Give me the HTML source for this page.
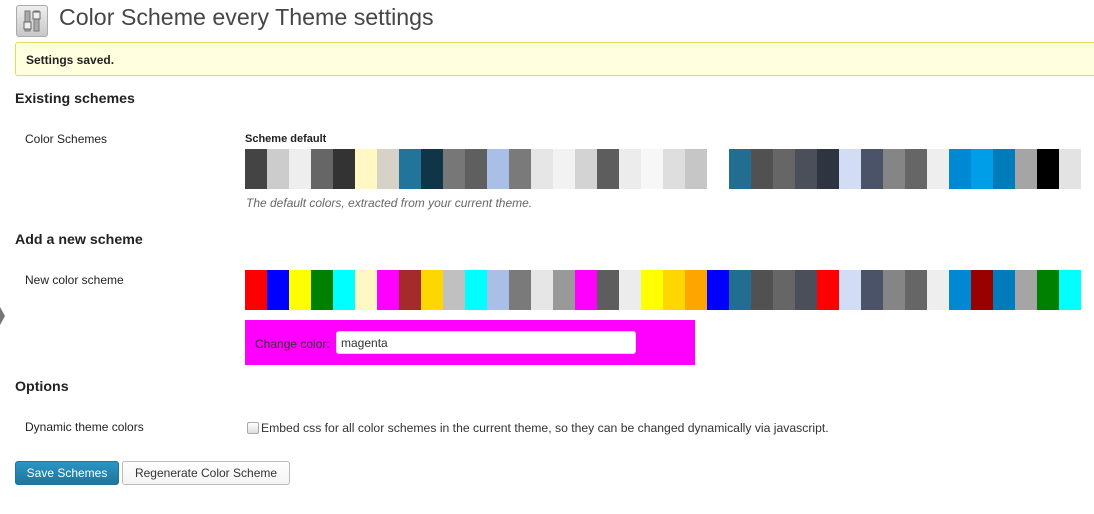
<!DOCTYPE html>
<html><head><meta charset="utf-8"><style>
body{margin:0;width:1094px;height:514px;background:#fff;font-family:"Liberation Sans",sans-serif;color:#333;position:relative;overflow:hidden}
.a{position:absolute}
.row{position:absolute;display:flex;height:40px}
.row span{width:22px;height:40px;display:block}
h1{position:absolute;left:59px;top:4px;margin:0;font-weight:normal;font-size:23.2px;color:#464646}
h3{position:absolute;left:15px;margin:0;font-size:14.2px;font-weight:bold;color:#222}
.lbl{position:absolute;left:25px;font-size:12px;color:#222}
</style></head><body>
<div class="a" style="left:16px;top:5px;width:30px;height:30px;border:1px solid #aaa;border-radius:3px;background:linear-gradient(#eee,#c8c8c8)">
<svg width="30" height="30" viewBox="0 0 30 30"><rect x="8" y="5" width="5" height="20" fill="#aaa" stroke="#777" stroke-width="1"/><rect x="7" y="16" width="7" height="7" fill="#eee" stroke="#666"/><rect x="17" y="5" width="5" height="20" fill="#aaa" stroke="#777"/><rect x="16" y="6" width="7" height="7" fill="#eee" stroke="#666"/></svg></div>
<h1>Color Scheme every Theme settings</h1>
<div class="a" style="left:15px;top:42px;width:1090px;height:32px;background:#ffffe0;border:1px solid #e6db55;border-radius:3px"></div>
<div class="a" style="left:26px;top:53px;font-size:12px;font-weight:bold;color:#222">Settings saved.</div>
<h3 style="top:91px">Existing schemes</h3>
<div class="lbl" style="top:132px">Color Schemes</div>
<div class="a" style="left:245px;top:133px;font-size:11px;font-weight:bold;color:#222">Scheme default</div>
<div class="row" style="left:245px;top:149px">
<span style="background:#444"></span><span style="background:#ccc"></span><span style="background:#eee"></span><span style="background:#666"></span><span style="background:#333"></span><span style="background:#fff8c4"></span><span style="background:#d6d2c8"></span><span style="background:#21759b"></span><span style="background:#103547"></span><span style="background:#777"></span><span style="background:#5f5f5f"></span><span style="background:#a9bfe5"></span><span style="background:#7a7a7a"></span><span style="background:#e6e6e6"></span><span style="background:#f2f2f2"></span><span style="background:#d3d3d3"></span><span style="background:#5d5d5d"></span><span style="background:#ececec"></span><span style="background:#f7f7f7"></span><span style="background:#dedede"></span><span style="background:#c6c6c6"></span><span style="background:#fff"></span>
<span style="background:#216e91"></span><span style="background:#515151"></span><span style="background:#666"></span><span style="background:#4a4f59"></span><span style="background:#2e3440"></span><span style="background:#d2ddf5"></span><span style="background:#4a5367"></span><span style="background:#858585"></span><span style="background:#666"></span><span style="background:#eee"></span><span style="background:#0088d3"></span><span style="background:#009ee8"></span><span style="background:#007cba"></span><span style="background:#a5a5a5"></span><span style="background:#000"></span><span style="background:#e3e3e3"></span>
</div>
<div class="a" style="left:246px;top:196px;font-size:12px;font-style:italic;color:#666">The default colors, extracted from your current theme.</div>
<h3 style="top:232px">Add a new scheme</h3>
<div class="lbl" style="top:273px">New color scheme</div>
<div class="row" style="left:245px;top:270px">
<span style="background:red"></span><span style="background:blue"></span><span style="background:yellow"></span><span style="background:green"></span><span style="background:cyan"></span><span style="background:#fff8c4"></span><span style="background:magenta"></span><span style="background:#a52a2a"></span><span style="background:gold"></span><span style="background:silver"></span><span style="background:cyan"></span><span style="background:#a9bfe5"></span><span style="background:#7a7a7a"></span><span style="background:#e6e6e6"></span><span style="background:#999"></span><span style="background:magenta"></span><span style="background:#5d5d5d"></span><span style="background:#ececec"></span><span style="background:yellow"></span><span style="background:gold"></span><span style="background:orange"></span><span style="background:blue"></span><span style="background:#216e91"></span><span style="background:#515151"></span><span style="background:#666"></span><span style="background:#4a4f59"></span><span style="background:red"></span><span style="background:#d2ddf5"></span><span style="background:#4a5367"></span><span style="background:#858585"></span><span style="background:#666"></span><span style="background:#eee"></span><span style="background:#0088d3"></span><span style="background:#900"></span><span style="background:#007cba"></span><span style="background:#a5a5a5"></span><span style="background:green"></span><span style="background:cyan"></span>
</div>
<div class="a" style="left:0;top:307px;width:0;height:0;border-top:9px solid transparent;border-bottom:9px solid transparent;border-left:5px solid #777"></div>
<div class="a" style="left:245px;top:320px;width:450px;height:45px;background:#f0f"></div>
<div class="a" style="left:255px;top:337px;font-size:12px;color:#333">Change color:</div>
<div class="a" style="left:336px;top:331px;background:#fff;border:1px solid #ddd;border-radius:3px;font-size:12px;line-height:23px;padding-left:4px;box-sizing:border-box;width:300px;height:23px;color:#333">magenta</div>
<h3 style="top:379px">Options</h3>
<div class="lbl" style="top:420px">Dynamic theme colors</div>
<div class="a" style="left:247px;top:422px;width:10px;height:10px;border:1px solid #aaa;border-radius:2px;background:linear-gradient(#fff,#ddd)"></div>
<div class="a" style="left:261px;top:421px;font-size:12.2px;color:#333">Embed css for all color schemes in the current theme, so they can be changed dynamically via javascript.</div>
<div class="a" style="left:15px;top:461px;width:104px;height:24px;background:linear-gradient(#2a95c5,#21759b);border:1px solid #21759b;border-radius:3px;box-sizing:border-box;color:#fff;font-size:12px;text-align:center;line-height:22px">Save Schemes</div>
<div class="a" style="left:122px;top:461px;width:168px;height:24px;background:linear-gradient(#fefefe,#f4f4f4);border:1px solid #bbb;border-radius:3px;box-sizing:border-box;color:#333;font-size:12px;text-align:center;line-height:22px">Regenerate Color Scheme</div>
</body></html>
